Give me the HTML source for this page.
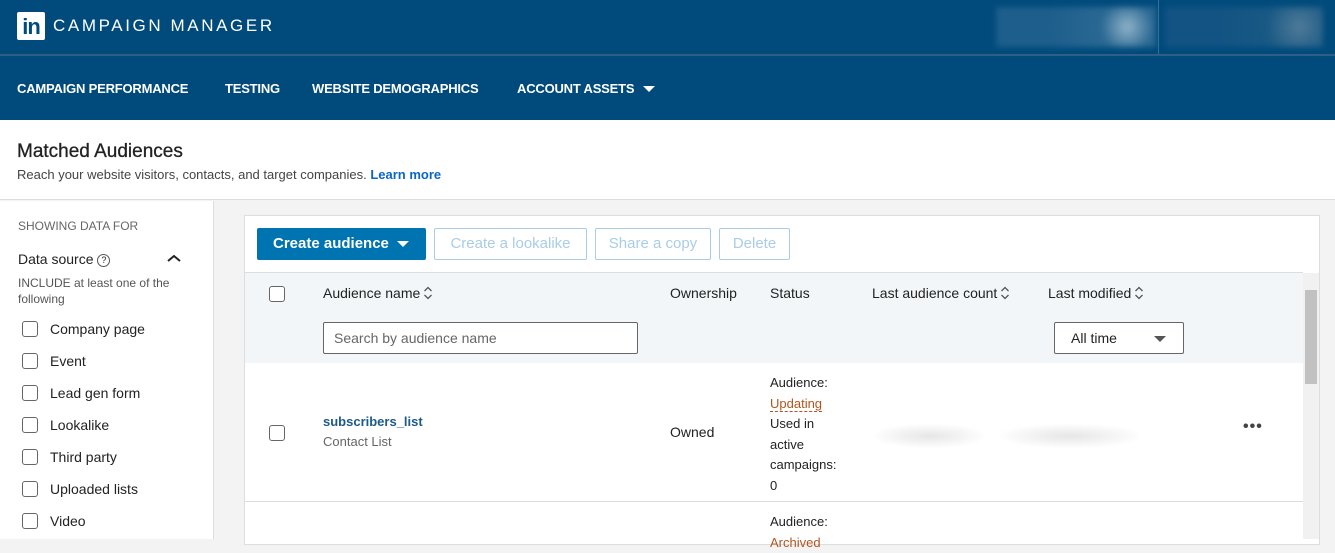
<!DOCTYPE html>
<html><head><style>
*{box-sizing:border-box;margin:0;padding:0}
body{width:1335px;height:539px;overflow:hidden;font-family:"Liberation Sans",sans-serif;background:#f3f3f3;position:relative;color:#222}
.abs{position:absolute}
.hdr{left:0;top:0;width:1335px;height:120px;background:#004b7c}
.nav{color:#fff;font-weight:bold;font-size:13px;top:81px;letter-spacing:-0.2px}
.cb{position:absolute;width:16px;height:16px;border:1px solid #666;border-radius:3px;background:#fff}
.side{font-size:14px;color:#222}
.btn{position:absolute;top:228px;height:32px;border:1px solid #a9cde6;border-radius:2px;color:#a9cde6;font-size:15px;line-height:30px;text-align:center;background:#fff}
.th{font-size:14px;top:285px;color:#222;white-space:nowrap}
.srt{display:inline-block;vertical-align:-3px;margin-left:3px}
</style></head><body>
<div class="abs hdr"></div>
<div class="abs" style="left:0;top:54px;width:1335px;height:2px;background:#2e5f85"></div>
<div class="abs" style="left:17px;top:12px;width:28px;height:28px;background:#fff;border-radius:2px;color:#004b7c;font-weight:bold;font-size:22px;line-height:30px;text-align:center;letter-spacing:-1px">in</div>
<div class="abs" style="left:53px;top:16px;color:#fff;font-size:17px;letter-spacing:2.6px">CAMPAIGN MANAGER</div>
<div class="abs" style="left:996px;top:7px;width:160px;height:40px;background:radial-gradient(circle at 82% 50%,#8fb2c8,#2a6893 20%,#1d5e8c 60%);filter:blur(3px)"></div>
<div class="abs" style="left:1158px;top:0;width:1px;height:54px;background:#3a6d94"></div>
<div class="abs" style="left:1165px;top:7px;width:158px;height:40px;background:radial-gradient(circle at 85% 50%,#4f7a98,#175884 25%,#125383 60%);filter:blur(3px)"></div>
<div class="abs nav" style="left:17px">CAMPAIGN PERFORMANCE</div>
<div class="abs nav" style="left:225px">TESTING</div>
<div class="abs nav" style="left:312px">WEBSITE DEMOGRAPHICS</div>
<div class="abs nav" style="left:517px">ACCOUNT ASSETS</div>
<div class="abs" style="left:643px;top:86px;border-left:6px solid transparent;border-right:6px solid transparent;border-top:6px solid #fff"></div>
<div class="abs" style="left:0;top:120px;width:1335px;height:80px;background:#fff;border-bottom:1px solid #ddd"></div>
<div class="abs" style="left:17px;top:141px;font-size:19px;color:#222;font-weight:500;-webkit-text-stroke:0.3px #222">Matched Audiences</div>
<div class="abs" style="left:17px;top:167px;font-size:13px;color:#444">Reach your website visitors, contacts, and target companies. <b style="color:#0a66c2">Learn more</b></div>
<div class="abs" style="left:0;top:201px;width:214px;height:338px;background:#fff;border-right:1px solid #ddd"></div>
<div class="abs" style="left:18px;top:219px;font-size:12px;color:#666">SHOWING DATA FOR</div>
<div class="abs side" style="left:18px;top:251px">Data source <span style="display:inline-block;width:13px;height:13px;border:1.5px solid #555;border-radius:50%;font-size:9px;text-align:center;line-height:11px;vertical-align:1px">?</span></div>
<svg class="abs" style="left:166px;top:253px" width="16" height="10"><path d="M2 8 L8 3 L14 8" stroke="#222" stroke-width="2" fill="none"/></svg>
<div class="abs" style="left:18px;top:275px;font-size:12px;color:#555;line-height:16px;width:170px">INCLUDE at least one of the following</div>
<div class="cb" style="left:22px;top:321px"></div><div class="abs side" style="left:50px;top:321px">Company page</div>
<div class="cb" style="left:22px;top:353px"></div><div class="abs side" style="left:50px;top:353px">Event</div>
<div class="cb" style="left:22px;top:385px"></div><div class="abs side" style="left:50px;top:385px">Lead gen form</div>
<div class="cb" style="left:22px;top:417px"></div><div class="abs side" style="left:50px;top:417px">Lookalike</div>
<div class="cb" style="left:22px;top:449px"></div><div class="abs side" style="left:50px;top:449px">Third party</div>
<div class="cb" style="left:22px;top:481px"></div><div class="abs side" style="left:50px;top:481px">Uploaded lists</div>
<div class="cb" style="left:22px;top:513px"></div><div class="abs side" style="left:50px;top:513px">Video</div>
<div class="abs" style="left:244px;top:215px;width:1076px;height:330px;background:#fff;border:1px solid #ddd"></div>
<div class="abs" style="left:257px;top:228px;width:169px;height:32px;background:#0073b1;border-radius:2px;color:#fff;font-weight:bold;font-size:15px;line-height:32px;padding-left:16px">Create audience</div>
<div class="abs" style="left:397px;top:241px;border-left:6px solid transparent;border-right:6px solid transparent;border-top:6px solid #fff"></div>
<div class="btn" style="left:434px;width:153px">Create a lookalike</div>
<div class="btn" style="left:595px;width:116px">Share a copy</div>
<div class="btn" style="left:719px;width:71px">Delete</div>
<div class="abs" style="left:245px;top:272px;width:1058px;height:91px;background:#f3f6f8;border-top:1px solid #ddd"></div>
<div class="cb" style="left:269px;top:286px"></div>
<div class="abs th" style="left:323px">Audience name<svg class="srt" width="10" height="16"><path d="M1.5 6 L5 2.5 L8.5 6 M1.5 10 L5 13.5 L8.5 10" stroke="#555" stroke-width="1.3" fill="none"/></svg></div>
<div class="abs th" style="left:670px">Ownership</div>
<div class="abs th" style="left:770px">Status</div>
<div class="abs th" style="left:872px">Last audience count<svg class="srt" width="10" height="16"><path d="M1.5 6 L5 2.5 L8.5 6 M1.5 10 L5 13.5 L8.5 10" stroke="#555" stroke-width="1.3" fill="none"/></svg></div>
<div class="abs th" style="left:1048px">Last modified<svg class="srt" width="10" height="16"><path d="M1.5 6 L5 2.5 L8.5 6 M1.5 10 L5 13.5 L8.5 10" stroke="#555" stroke-width="1.3" fill="none"/></svg></div>
<div class="abs" style="left:323px;top:322px;width:315px;height:32px;border:1px solid #666;border-radius:2px;background:#fff;font-size:14px;color:#666;padding-left:10px;line-height:30px">Search by audience name</div>
<div class="abs" style="left:1054px;top:322px;width:130px;height:32px;border:1px solid #666;border-radius:2px;background:#fff;font-size:14px;color:#222;padding-left:16px;line-height:30px">All time</div>
<div class="abs" style="left:1154px;top:336px;border-left:6px solid transparent;border-right:6px solid transparent;border-top:6px solid #555"></div>
<div class="abs" style="left:1303px;top:273px;width:16px;height:266px;background:#f1f1f1"></div>
<div class="abs" style="left:1305px;top:290px;width:12px;height:94px;background:#c1c1c1"></div>
<div class="cb" style="left:269px;top:425px"></div>
<div class="abs" style="left:323px;top:414px;font-size:13px;font-weight:bold;color:#1d5a8a">subscribers_list</div>
<div class="abs" style="left:323px;top:434px;font-size:13px;color:#666">Contact List</div>
<div class="abs" style="left:670px;top:424px;font-size:14px">Owned</div>
<div class="abs" style="left:770px;top:373px;font-size:13px;line-height:20.5px">Audience:<br><span style="color:#b3541e;border-bottom:1px dashed #b3541e">Updating</span><br>Used in<br>active<br>campaigns:<br>0</div>
<div class="abs" style="left:874px;top:424px;width:110px;height:24px;background:radial-gradient(ellipse at center,#e6e6e6,#fff 75%)"></div>
<div class="abs" style="left:1000px;top:424px;width:140px;height:24px;background:radial-gradient(ellipse at center,#e6e6e6,#fff 75%)"></div>
<div class="abs" style="left:1243px;top:418px;font-size:16px;font-weight:bold;color:#444;letter-spacing:1px">•••</div>
<div class="abs" style="left:245px;top:501px;width:1058px;height:1px;background:#ddd"></div>
<div class="abs" style="left:770px;top:512px;font-size:13px;line-height:20.5px">Audience:<br><span style="color:#b3541e">Archived</span></div>
</body></html>
